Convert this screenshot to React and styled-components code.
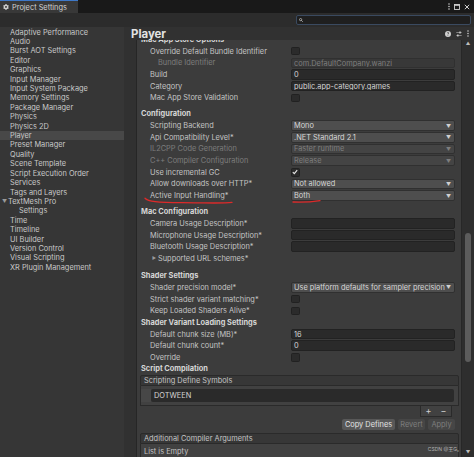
import React from 'react';
import styled, { createGlobalStyle } from 'styled-components';
import { FaCog } from 'react-icons/fa';
import { BsQuestionCircleFill } from 'react-icons/bs';

const FONT = `Inter, "Noto Sans", "Liberation Sans", sans-serif`;

const Global = createGlobalStyle`
  html, body { margin: 0; padding: 0; background: #191919; }
  * { box-sizing: border-box; }
`;

const Window = styled.div`
  width: 474px;
  height: 457px;
  display: flex;
  flex-direction: column;
  overflow: hidden;
  position: relative;
  background: #191919;
  font-family: ${FONT};
  font-size: 7.4px;
  color: #c4c4c4;
`;

const TitleBar = styled.div`
  height: 13px;
  display: flex;
  align-items: stretch;
  background: #191919;
`;

const Tab = styled.div`
  width: 78px;
  background: #383838;
  border-top: 1px solid #3e78c8;
  display: flex;
  align-items: center;
  gap: 3px;
  padding-left: 3px;
  color: #d2d2d2;
  white-space: nowrap;
`;

const WinControls = styled.div`
  margin-left: auto;
  display: flex;
  align-items: center;
  gap: 4px;
  padding-right: 4px;
`;

const Toolbar = styled.div`
  height: 14px;
  background: #2c2c2c;
  display: flex;
  justify-content: flex-end;
  align-items: center;
  padding-right: 3px;
`;

const SearchField = styled.div`
  width: 175px;
  height: 9.5px;
  background: #1f1f1f;
  border: 1px solid #3a4a60;
  border-radius: 2px;
  display: flex;
  align-items: center;
  padding-left: 2px;
`;

const Main = styled.div`
  flex: 1;
  min-height: 0;
  display: flex;
`;

const Sidebar = styled.div`
  width: 124px;
  background: #363636;
  padding-top: 0.6px;
  display: flex;
  flex-direction: column;
`;

const NavItem = styled.div`
  height: 9.42px;
  line-height: 9.42px;
  padding-left: ${p => p.$indent}px;
  background: ${p => (p.$selected ? '#484848' : 'transparent')};
  color: #c9c9c9;
  white-space: nowrap;
  display: flex;
  align-items: center;
`;

const FoldArrow = styled.span`
  display: inline-block;
  width: 8px;
  font-size: 5px;
  color: #9a9a9a;
  padding-left: 2px;
`;

const RightPanel = styled.div`
  flex: 1;
  min-width: 0;
  display: flex;
  flex-direction: column;
  background: #313131;
`;

const InspectorHeader = styled.div`
  height: 13px;
  display: flex;
  align-items: center;
  padding-left: 7px;
  padding-right: 5px;
`;

const Title = styled.div`
  font-size: 11.4px;
  font-weight: 700;
  color: #e2e2e2;
  line-height: 13px;
  margin-top: 1px;
`;

const HeaderIcons = styled.div`
  margin-left: auto;
  display: flex;
  align-items: center;
  gap: 5px;
  color: #c8c8c8;
`;

const InspectorBody = styled.div`
  flex: 1;
  min-height: 0;
  display: flex;
`;

const Gutter = styled.div`
  width: 13px;
  background: #313131;
  border-right: 1px solid #262626;
`;

const Content = styled.div`
  flex: 1;
  min-width: 0;
  background: #3c3c3c;
  position: relative;
  overflow: hidden;
  padding: 0 6px 0 4px;
`;

const Scrollbar = styled.div`
  width: 13px;
  background: #2e2e2e;
  border-left: 1px solid #272727;
  display: flex;
  flex-direction: column;
  align-items: center;
`;

const ScrollArrow = styled.div`
  height: 8px;
  font-size: 4.5px;
  color: #bdbdbd;
  line-height: 8px;
`;

const Thumb = styled.div`
  width: 6px;
  border-radius: 3px;
  background: #5c5c5c;
`;

const Row = styled.div`
  height: 11.67px;
  display: flex;
  align-items: center;
`;

const SectionTitle = styled.div`
  height: 11.67px;
  line-height: 11.67px;
  margin-top: ${p => p.$mt || 0}px;
  font-weight: 700;
  color: #d6d6d6;
  white-space: nowrap;
`;

const Label = styled.div`
  width: 150px;
  flex: none;
  padding-left: ${p => 9 + (p.$indent || 0)}px;
  color: ${p => (p.$dim ? '#7c7c7c' : '#c4c4c4')};
  white-space: nowrap;
  overflow: hidden;
  display: flex;
  align-items: center;
`;

const Control = styled.div`
  flex: 1;
  min-width: 0;
  display: flex;
  align-items: center;
`;

const TextField = styled.div`
  flex: 1;
  height: 10.6px;
  line-height: 9px;
  background: ${p => (p.$dim ? '#383838' : '#2a2a2a')};
  border: 1px solid ${p => (p.$dim ? '#303030' : '#222222')};
  border-radius: 2px;
  padding: 0 2px;
  color: ${p => (p.$dim ? '#7e7e7e' : '#d4d4d4')};
  white-space: nowrap;
  overflow: hidden;
`;

const Dropdown = styled.div`
  flex: 1;
  height: 10.6px;
  background: ${p => (p.$dim ? '#444444' : '#4e4e4e')};
  border: 1px solid #303030;
  border-radius: 2px;
  padding: 0 3px 0 2px;
  display: flex;
  align-items: center;
  justify-content: space-between;
  color: ${p => (p.$dim ? '#7e7e7e' : '#d6d6d6')};
  white-space: nowrap;
  overflow: hidden;
`;

const Caret = styled.span`
  font-size: 5px;
  color: ${p => (p.$dim ? '#7e7e7e' : '#d0d0d0')};
`;

const Checkbox = styled.div`
  width: 8.5px;
  height: 8.5px;
  background: #2b2b2b;
  border: 1px solid #212121;
  border-radius: 1.5px;
  display: flex;
  align-items: center;
  justify-content: center;
`;

const FoldLabel = styled.span`
  display: inline-block;
  width: 8px;
  font-size: 4.5px;
  color: #9a9a9a;
  padding-left: 2px;
`;

const Box = styled.div`
  margin: 0 -4px 0 -1px;
  display: flex;
  flex-direction: column;
`;

const BoxHeader = styled.div`
  height: 11.5px;
  line-height: 10px;
  background: #373737;
  border: 1px solid #2a2a2a;
  border-radius: 2px 2px 0 0;
  padding-left: 3px;
  color: #c4c4c4;
  margin-top: ${p => p.$mt || 0}px;
  white-space: nowrap;
`;

const BoxBody = styled.div`
  background: #414141;
  border: 1px solid #2a2a2a;
  border-top: none;
  padding: ${p => p.$pad || '2px 4px 2px 0'};
  color: #c4c4c4;
`;

const ListRow = styled.div`
  height: 13px;
  display: flex;
`;

const Handle = styled.div`
  width: 10px;
  background: #474747;
`;

const DefineField = styled.div`
  flex: 1;
  background: #2a2a2a;
  border-radius: 2px;
  padding-left: 3px;
  line-height: 13px;
  color: #d4d4d4;
`;

const ListFooter = styled.div`
  align-self: flex-end;
  margin-right: 7px;
  width: 32px;
  height: 11px;
  background: #414141;
  border: 1px solid #2a2a2a;
  border-top: none;
  display: flex;
  align-items: center;
  justify-content: space-around;
  color: #d0d0d0;
  font-size: 9px;
  line-height: 9px;
`;

const ButtonRow = styled.div`
  display: flex;
  justify-content: flex-end;
  gap: 3px;
  margin-top: 2px;
`;

const Button = styled.div`
  width: ${p => p.$w}px;
  height: 11px;
  line-height: 11px;
  text-align: center;
  border-radius: 2px;
  background: ${p => (p.$dim ? '#464646' : '#585858')};
  color: ${p => (p.$dim ? '#7e7e7e' : '#e4e4e4')};
  white-space: nowrap;
`;

const Annotation = styled.svg`
  position: absolute;
  left: 0;
  top: 0;
  pointer-events: none;
`;

const Watermark = styled.div`
  position: absolute;
  right: 12px;
  bottom: 5px;
  font-family: Inter, "Noto Sans", "Noto Sans CJK SC", sans-serif;
  font-size: 5px;
  color: #b4b4b4;
  white-space: nowrap;
`;

const navItems = [
  'Adaptive Performance', 'Audio', 'Burst AOT Settings', 'Editor', 'Graphics',
  'Input Manager', 'Input System Package', 'Memory Settings', 'Package Manager',
  'Physics', 'Physics 2D', 'Player', 'Preset Manager', 'Quality', 'Scene Template',
  'Script Execution Order', 'Services', 'Tags and Layers', 'TextMesh Pro', 'Settings',
  'Time', 'Timeline', 'UI Builder', 'Version Control', 'Visual Scripting',
  'XR Plugin Management',
];

const rows = [
  { type: 'section', text: 'Mac App Store Options', mt: -6.3 },
  { type: 'check', label: 'Override Default Bundle Identifier' },
  { type: 'text', label: 'Bundle Identifier', indent: 8, dim: true, value: 'com.DefaultCompany.wanzi' },
  { type: 'text', label: 'Build', value: '0' },
  { type: 'text', label: 'Category', value: 'public.app-category.games' },
  { type: 'check', label: 'Mac App Store Validation' },
  { type: 'section', text: 'Configuration', mt: 4.5 },
  { type: 'drop', label: 'Scripting Backend', value: 'Mono' },
  { type: 'drop', label: 'Api Compatibility Level*', value: '.NET Standard 2.1' },
  { type: 'drop', label: 'IL2CPP Code Generation', value: 'Faster runtime', dim: true },
  { type: 'drop', label: 'C++ Compiler Configuration', value: 'Release', dim: true },
  { type: 'check', label: 'Use incremental GC', checked: true },
  { type: 'drop', label: 'Allow downloads over HTTP*', value: 'Not allowed' },
  { type: 'drop', label: 'Active Input Handling*', value: 'Both' },
  { type: 'section', text: 'Mac Configuration', mt: 4.6 },
  { type: 'text', label: 'Camera Usage Description*', value: '' },
  { type: 'text', label: 'Microphone Usage Description*', value: '' },
  { type: 'text', label: 'Bluetooth Usage Description*', value: '' },
  { type: 'fold', label: 'Supported URL schemes*' },
  { type: 'section', text: 'Shader Settings', mt: 5.7 },
  { type: 'drop', label: 'Shader precision model*', value: 'Use platform defaults for sampler precision' },
  { type: 'check', label: 'Strict shader variant matching*' },
  { type: 'check', label: 'Keep Loaded Shaders Alive*' },
  { type: 'section', text: 'Shader Variant Loading Settings' },
  { type: 'text', label: 'Default chunk size (MB)*', value: '16' },
  { type: 'text', label: 'Default chunk count*', value: '0' },
  { type: 'check', label: 'Override' },
  { type: 'section', text: 'Script Compilation' },
];

function InspectorRow({ r }) {
  if (r.type === 'section') return <SectionTitle $mt={r.mt}>{r.text}</SectionTitle>;
  if (r.type === 'fold') {
    return (
      <Row>
        <Label><FoldLabel>▶</FoldLabel>{r.label}</Label>
      </Row>
    );
  }
  let control = null;
  if (r.type === 'check') {
    control = (
      <Checkbox>
        {r.checked && (
          <svg width="6" height="6" viewBox="0 0 6 6">
            <path d="M0.8 3.2 L2.3 4.7 L5.2 1.2" fill="none" stroke="#e8e8e8" strokeWidth="1.1" />
          </svg>
        )}
      </Checkbox>
    );
  } else if (r.type === 'text') {
    control = <TextField $dim={r.dim}>{r.value}</TextField>;
  } else if (r.type === 'drop') {
    control = (
      <Dropdown $dim={r.dim}>
        <span>{r.value}</span>
        <Caret $dim={r.dim}>▼</Caret>
      </Dropdown>
    );
  }
  return (
    <Row>
      <Label $indent={r.indent} $dim={r.dim}>{r.label}</Label>
      <Control>{control}</Control>
    </Row>
  );
}

function Dots({ color = '#c8c8c8' }) {
  return (
    <svg width="2" height="7" viewBox="0 0 2 7">
      <circle cx="1" cy="1" r="0.8" fill={color} />
      <circle cx="1" cy="3.5" r="0.8" fill={color} />
      <circle cx="1" cy="6" r="0.8" fill={color} />
    </svg>
  );
}

export default function App() {
  return (
    <>
      <Global />
      <Window>
        <TitleBar>
          <Tab>
            <FaCog size={6} color="#d0d0d0" />
            <span>Project Settings</span>
          </Tab>
          <WinControls>
            <Dots />
            <svg width="6" height="6" viewBox="0 0 6 6">
              <rect x="0.5" y="0.5" width="5" height="5" fill="none" stroke="#d0d0d0" strokeWidth="0.9" />
              <rect x="0.5" y="0.5" width="5" height="1.3" fill="#d0d0d0" />
            </svg>
            <svg width="6" height="6" viewBox="0 0 6 6">
              <path d="M0.8 0.8 L5.2 5.2 M5.2 0.8 L0.8 5.2" stroke="#d0d0d0" strokeWidth="1" />
            </svg>
          </WinControls>
        </TitleBar>
        <Toolbar>
          <SearchField>
            <svg width="4" height="4" viewBox="0 0 4 4">
              <circle cx="1.6" cy="1.6" r="1.1" fill="none" stroke="#cfcfcf" strokeWidth="0.7" />
              <path d="M2.4 2.4 L3.7 3.7" stroke="#cfcfcf" strokeWidth="0.8" />
            </svg>
          </SearchField>
        </Toolbar>
        <Main>
          <Sidebar>
            {navItems.map((n, i) => {
              if (n === 'TextMesh Pro') {
                return (
                  <NavItem key={i} $indent={0}>
                    <FoldArrow>▼</FoldArrow>{n}
                  </NavItem>
                );
              }
              return (
                <NavItem key={i} $indent={n === 'Settings' && i === 19 ? 19 : 10} $selected={n === 'Player'}>
                  {n}
                </NavItem>
              );
            })}
          </Sidebar>
          <RightPanel>
            <InspectorHeader>
              <Title>Player</Title>
              <HeaderIcons>
                <BsQuestionCircleFill size={6} color="#cfcfcf" />
                <svg width="6" height="6" viewBox="0 0 6 6">
                  <path d="M0.3 1.5 H5.7 M0.3 4.5 H5.7" stroke="#a8a8a8" strokeWidth="0.7" />
                  <rect x="3.4" y="0.5" width="1.3" height="2" fill="#d8d8d8" />
                  <rect x="1.2" y="3.5" width="1.3" height="2" fill="#d8d8d8" />
                </svg>
                <Dots />
              </HeaderIcons>
            </InspectorHeader>
            <InspectorBody>
              <Gutter />
              <Content>
                {rows.map((r, i) => <InspectorRow key={i} r={r} />)}
                <Box>
                  <BoxHeader>Scripting Define Symbols</BoxHeader>
                  <BoxBody $pad="3px 4px 2.5px 0">
                    <ListRow>
                      <Handle />
                      <DefineField>DOTWEEN</DefineField>
                    </ListRow>
                  </BoxBody>
                  <ListFooter>
                    <span>+</span>
                    <span>−</span>
                  </ListFooter>
                </Box>
                <ButtonRow>
                  <Button $w={53}>Copy Defines</Button>
                  <Button $w={27} $dim>Revert</Button>
                  <Button $w={27} $dim>Apply</Button>
                </ButtonRow>
                <Box>
                  <BoxHeader $mt={3}>Additional Compiler Arguments</BoxHeader>
                  <BoxBody $pad="3px 4px 6px 3px">List is Empty</BoxBody>
                </Box>
                <Annotation width="330" height="420" viewBox="0 0 330 420">
                  <path d="M8 158.3 C11 161.6, 20 162.6, 45 162.7 S 86 163.6, 95 162.4" fill="none" stroke="#dd2a2a" strokeWidth="1.3" strokeLinecap="round" />
                  <path d="M156 162 Q 170 162.6, 183 160.6" fill="none" stroke="#dd2a2a" strokeWidth="1.3" strokeLinecap="round" />
                </Annotation>
              </Content>
              <Scrollbar>
                <ScrollArrow>▲</ScrollArrow>
                <Thumb style={{ marginTop: 185, height: 129 }} />
                <ScrollArrow style={{ marginTop: 'auto' }}>▼</ScrollArrow>
              </Scrollbar>
            </InspectorBody>
          </RightPanel>
        </Main>
        <Watermark>CSDN @王G。</Watermark>
      </Window>
    </>
  );
}
